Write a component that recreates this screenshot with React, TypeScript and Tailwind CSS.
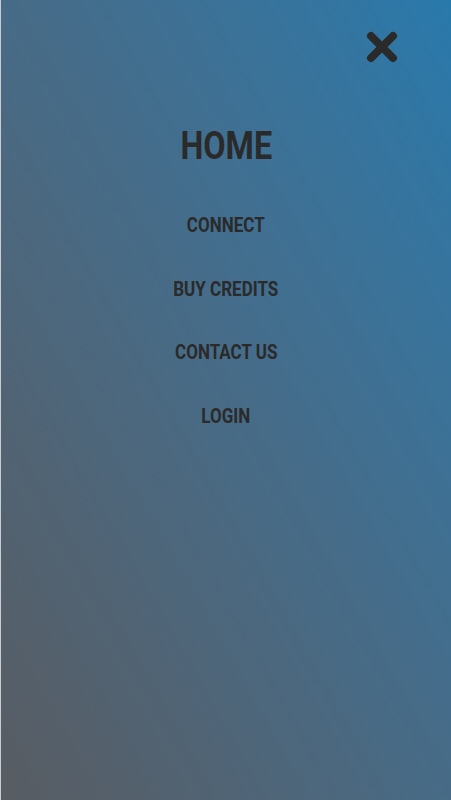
const links = ['CONNECT', 'BUY CREDITS', 'CONTACT US', 'LOGIN']

function CloseIcon() {
  return (
    <svg className="block" width="34" height="34" viewBox="0 0 34 34" aria-hidden="true">
      <path d="M6 6 L28 28 M28 6 L6 28" stroke="#2a2a2a" strokeWidth="8" strokeLinecap="round" />
    </svg>
  )
}

export default function App() {
  return (
    <div
      className="flex h-screen w-full flex-col border-l border-[#c9ccd0] bg-linear-to-tr from-[#585c62] to-[#2879ab] text-[#2a2a2a]"
      style={{ fontFamily: 'Roboto, "DejaVu Sans Condensed", sans-serif' }}
    >
      <div className="flex justify-end pr-[52px] pt-[30px]">
        <button className="block">
          <CloseIcon />
        </button>
      </div>

      <nav className="mt-[63px] flex flex-col items-center">
        <a className="block scale-x-[0.83] text-[39px] font-bold leading-[38px]">HOME</a>
        <ul className="mt-[48px] flex flex-col items-center gap-[39.5px]">
          {links.map((l) => (
            <li key={l}>
              <a className="block scale-x-[0.85] text-[20px] font-bold leading-[24px]">{l}</a>
            </li>
          ))}
        </ul>
      </nav>
    </div>
  )
}
